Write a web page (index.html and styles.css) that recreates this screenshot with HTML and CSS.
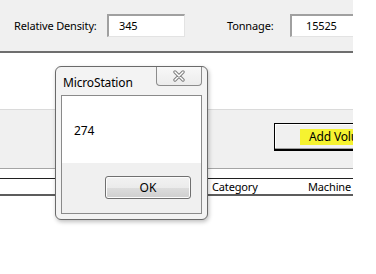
FILE: index.html
```html
<!DOCTYPE html>
<html lang="en">
  <head>
    <meta charset="UTF-8" />
    <title>Volume - MicroStation</title>
    <link rel="stylesheet" href="styles.css">
  </head>
  <body>
    <div id="form">
      <div id="densityPanel">
        <span class="label labelDensity">Relative Density:</span>
        <div class="field fieldDensity">345</div>
        <span class="label labelTonnage">Tonnage:</span>
        <div class="field fieldTonnage">15525</div>
      </div>

      <div id="spacer"></div>

      <div id="actionPanel">
        <button id="addVolumeButton"><span class="highlight">Add Volume</span></button>
      </div>

      <div id="listGap"></div>

      <div id="listHeader">
        <span class="col colFirst"></span>
        <span class="col colCategory">Category</span>
        <span class="col colMachine">Machine</span>
      </div>
    </div>

    <!-- Message box -->
    <div id="messageBox">
      <div class="titleBar">
        <span class="title">MicroStation</span>
        <div class="closeButton">
          <svg width="16" height="12" viewBox="0 0 16 12">
            <path d="M4 2 L12 10 M12 2 L4 10" stroke="#808080" stroke-width="3.4" stroke-linecap="round" fill="none" />
            <path d="M4 2 L12 10 M12 2 L4 10" stroke="#ffffff" stroke-width="1.4" stroke-linecap="round" fill="none" />
          </svg>
        </div>
      </div>
      <div class="client">
        <div class="message">274</div>
        <div class="footer">
          <button class="okButton">OK</button>
        </div>
      </div>
    </div>
  </body>
</html>
```

FILE: styles.css
```css
html {
  height: 100%;
}
body {
  margin: 0;
  min-height: 100%;
  background-color: #fff;
  font-family: "Noto Sans", "Open Sans", sans-serif;
  font-size: 11px;
  letter-spacing: -0.15px;
  color: #000;
  position: relative;
}
#form {
  width: 353px;
  overflow: hidden;
}
#densityPanel {
  display: flex;
  align-items: center;
  height: 51px;
  padding-left: 14px;
  background-color: #f0f0f0;
  border-bottom: 2px solid #6e6e6e;
  white-space: nowrap;
}
.label {
  flex: none;
}
.labelDensity {
  width: 93px;
}
.labelTonnage {
  width: 63px;
  margin-left: 42px;
}
.field {
  flex: none;
  height: 23px;
  box-sizing: border-box;
  padding-left: 10px;
  line-height: 19px;
  background: #fff;
  border-top: 2px solid #a0a0a0;
  border-left: 2px solid #a0a0a0;
  border-right: 1px solid #e3e3e3;
  border-bottom: 1px solid #e3e3e3;
  margin-top: -1px;
}
.fieldDensity {
  width: 78px;
}
.fieldTonnage {
  width: 80px;
  padding-left: 14px;
}
#spacer {
  height: 56px;
  border-bottom: 1px solid #dadada;
}
#actionPanel {
  height: 59px;
  background-color: #f0f0f0;
  border-bottom: 1px solid #a5a5a5;
  display: flex;
  align-items: flex-start;
  padding-left: 274px;
  padding-top: 13px;
  box-sizing: border-box;
}
#addVolumeButton {
  flex: none;
  width: 79px;
  height: 28px;
  padding: 0 0 0 34px;
  text-align: left;
  font-family: inherit;
  font-size: 12px;
  letter-spacing: -0.15px;
  background: #f0f0f0;
  border: 1px solid #000;
  border-right: none;
  border-bottom-width: 2px;
  box-shadow: inset 0 -1px 0 #a0a0a0, inset 1px 1px 0 #fff;
  white-space: nowrap;
  overflow: hidden;
}
.highlight {
  display: inline-block;
  background-color: #f6f330;
  padding: 0 0 0 9px;
  margin-left: -9px;
  line-height: 16px;
}
#listGap {
  height: 9px;
}
#listHeader {
  display: flex;
  height: 15px;
  border-top: 1px solid #202020;
  border-bottom: 2px solid #5c5c5c;
  line-height: 15px;
  white-space: nowrap;
}
.colFirst {
  width: 212px;
}
.colCategory {
  width: 96px;
}
/* Message box */
#messageBox {
  position: absolute;
  left: 55px;
  top: 66px;
  width: 153px;
  height: 154px;
  box-sizing: border-box;
  border: 1px solid #6a6a6a;
  border-radius: 6px;
  background: #f3f3f3;
  box-shadow: 1px 2px 4px rgba(0, 0, 0, 0.25);
  display: flex;
  flex-direction: column;
  padding: 0 5px 5px 5px;
}
.titleBar {
  height: 28px;
  display: flex;
  justify-content: space-between;
  align-items: flex-start;
}
.title {
  font-size: 12px;
  padding: 7px 0 0 2px;
}
.closeButton {
  flex: none;
  width: 46px;
  height: 19px;
  box-sizing: border-box;
  border: 1px solid #8c8c8c;
  border-top: none;
  border-radius: 0 0 4px 4px;
  background: linear-gradient(#f8f8f8, #ececec);
  display: flex;
  justify-content: center;
  align-items: center;
  margin-right: 0;
}
.client {
  flex: 1;
  border: 1px solid #8a8a8a;
  display: flex;
  flex-direction: column;
  background: #fff;
}
.message {
  height: 67px;
  padding: 26px 0 0 12px;
  box-sizing: border-box;
  font-size: 12px;
}
.footer {
  flex: 1;
  background: #f0f0f0;
  display: flex;
  justify-content: flex-end;
  align-items: flex-start;
  padding: 13px 10px 0 0;
}
.okButton {
  width: 86px;
  height: 23px;
  font-family: inherit;
  font-size: 12px;
  border: 1px solid #707070;
  border-radius: 3px;
  background: linear-gradient(#f2f2f2 0%, #ebebeb 50%, #dddddd 50%, #cfcfcf 100%);
  box-shadow: inset 0 0 0 1px #fcfcfc;
  padding: 0;
}
```
